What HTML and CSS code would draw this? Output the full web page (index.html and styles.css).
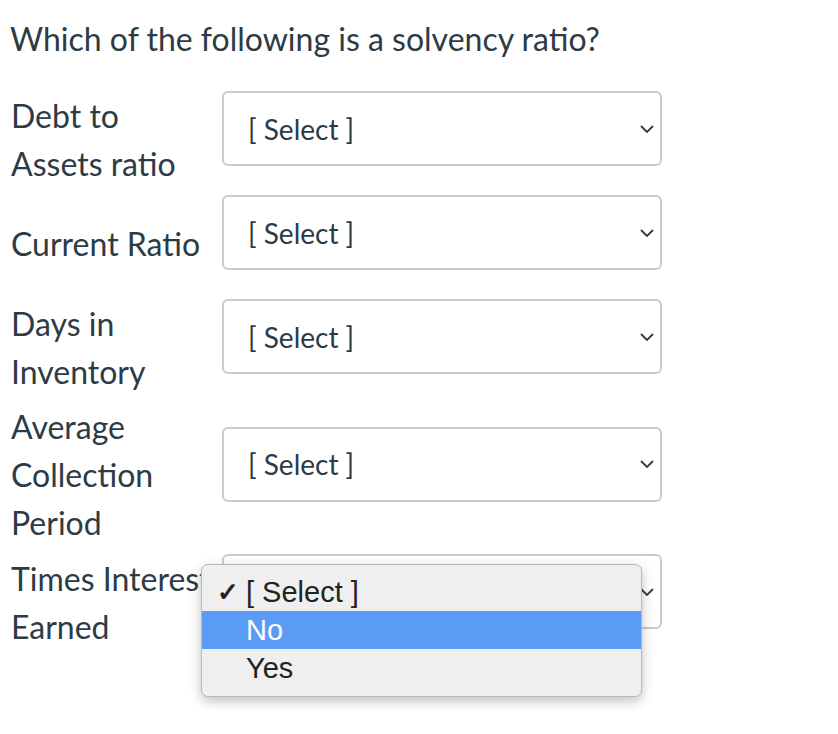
FILE: index.html
```html
<!DOCTYPE html>
<html lang="en">
<head>
<meta charset="utf-8">
<title>Solvency ratio question</title>
<link rel="stylesheet" href="styles.css">
</head>
<body>
<div class="page">
  <p class="title">Which of the following is a solvency ratio?</p>
  <div class="rows">
    <div class="label">Debt to Assets ratio</div>
    <div class="cell"><div class="select"><span class="value">[ Select ]</span><svg class="chev" viewBox="0 0 14 8"><path d="M1 1 L7 7 L13 1" fill="none" stroke="#2d3b45" stroke-width="1.8"/></svg></div></div>

    <div class="label">Current Ratio</div>
    <div class="cell"><div class="select"><span class="value">[ Select ]</span><svg class="chev" viewBox="0 0 14 8"><path d="M1 1 L7 7 L13 1" fill="none" stroke="#2d3b45" stroke-width="1.8"/></svg></div></div>

    <div class="label">Days in Inventory</div>
    <div class="cell"><div class="select"><span class="value">[ Select ]</span><svg class="chev" viewBox="0 0 14 8"><path d="M1 1 L7 7 L13 1" fill="none" stroke="#2d3b45" stroke-width="1.8"/></svg></div></div>

    <div class="label">Average Collection Period</div>
    <div class="cell"><div class="select"><span class="value">[ Select ]</span><svg class="chev" viewBox="0 0 14 8"><path d="M1 1 L7 7 L13 1" fill="none" stroke="#2d3b45" stroke-width="1.8"/></svg></div></div>

    <div class="label">Times Interest Earned</div>
    <div class="cell open"><div class="select"><span class="value">[ Select ]</span><svg class="chev" viewBox="0 0 14 8"><path d="M1 1 L7 7 L13 1" fill="none" stroke="#2d3b45" stroke-width="1.8"/></svg></div>
      <ul class="menu">
        <li class="opt checked"><span class="tick">✓</span>[ Select ]</li>
        <li class="opt hl">No</li>
        <li class="opt">Yes</li>
      </ul>
    </div>
  </div>
</div>
</body>
</html>
```
FILE: styles.css
```css
html, body {
  margin: 0;
  padding: 0;
  background: #ffffff;
  min-height: 734px;
}
.page {
  padding: 20px 10px;
  font-family: Lato, "Open Sans", sans-serif;
  color: #2d3b45;
}
.title {
  margin: 0 0 33px;
  font-size: 32px;
  line-height: 1.2;
}
.rows {
  display: grid;
  grid-template-columns: 203px 440px;
  column-gap: 9px;
  row-gap: 7px;
  align-items: center;
}
.label {
  font-size: 32px;
  line-height: 48px;
  padding-left: 1px;
}
.cell {
  position: relative;
  padding-bottom: 22px;
}
.select {
  box-sizing: border-box;
  height: 75px;
  border: 2px solid #c7cdd1;
  border-radius: 6px;
  background: #fff;
  display: flex;
  align-items: center;
  padding: 0 6px 0 24px;
}
.value {
  flex: 1;
  font-size: 28px;
}
.chev {
  width: 14px;
  height: 8px;
}
.menu {
  position: absolute;
  left: -21px;
  top: 10px;
  width: 441px;
  box-sizing: border-box;
  margin: 0;
  padding: 8px 0 9px;
  list-style: none;
  background: #efefef;
  border: 1px solid #b9b9b9;
  border-radius: 7px;
  box-shadow: 0 4px 12px rgba(0,0,0,0.25);
  font-family: "Liberation Sans", Arial, sans-serif;
  font-size: 29px;
  color: #222;
  z-index: 2;
}
.opt {
  height: 38px;
  line-height: 38px;
  padding-left: 44px;
  position: relative;
}
.tick {
  position: absolute;
  left: 15px;
  font-size: 26px;
  font-weight: bold;
}
.opt.hl {
  background: #5b9bf5;
  color: #fff;
}
```
